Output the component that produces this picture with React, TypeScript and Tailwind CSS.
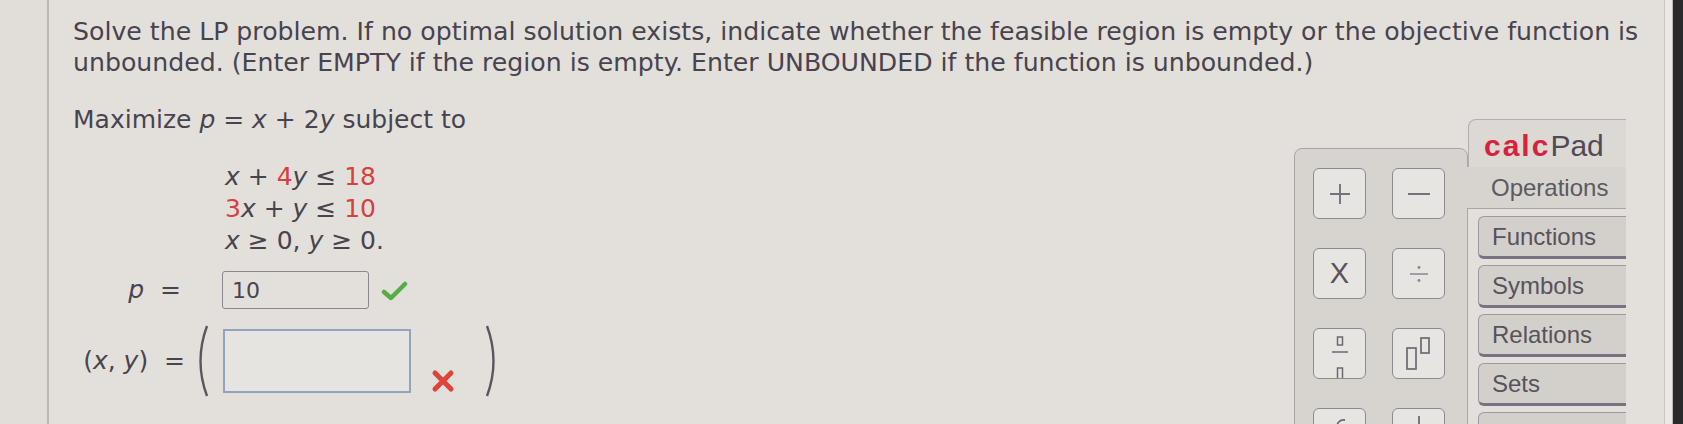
import React from 'react';

const body = { fontFamily: '"DejaVu Sans", Verdana, sans-serif' };
const arial = { fontFamily: '"Liberation Sans", Arial, sans-serif' };

const Key: React.FC<{ children: React.ReactNode }> = ({ children }) => (
  <div className="w-[53px] h-[51px] rounded-md border-[1.5px] border-[#8f8a8e] bg-[#e7e5e1] flex items-center justify-center overflow-hidden text-[#57525d]">
    {children}
  </div>
);

const Tab: React.FC<{ label?: string }> = ({ label }) => (
  <div className="h-[43px] rounded-l-md border border-[#9c98a0] border-b-[3px] border-b-[#7a7183] border-r-0 bg-[#d3d0cb] pl-[13px] flex items-center text-[24px] text-[#57525c]">
    {label}
  </div>
);

const CalcPad: React.FC = () => (
  <div className="flex items-start mt-[15px] mr-[38px] h-[310px] overflow-hidden" style={arial}>
    <div className="w-[174px] h-[300px] mt-[29px] rounded-t-lg border border-[#a9a5a6] bg-[#d7d4cf] pt-[19px] pl-[18px]">
      <div className="grid grid-cols-2 w-[132px] gap-x-[26px] gap-y-[29px]">
        <Key>
          <svg width="22" height="22" viewBox="0 0 22 22">
            <path d="M11 1v20M1 11h20" stroke="#75707a" strokeWidth="1.9" />
          </svg>
        </Key>
        <Key>
          <svg width="24" height="4" viewBox="0 0 24 4">
            <path d="M1 2h22" stroke="#75707a" strokeWidth="2" />
          </svg>
        </Key>
        <Key>
          <span className="text-[29px] leading-none font-medium">X</span>
        </Key>
        <Key>
          <svg width="22" height="22" viewBox="0 0 22 22">
            <path d="M2 11h18" stroke="#8a858c" strokeWidth="1.4" />
            <circle cx="11" cy="4.5" r="1.4" fill="#8a858c" />
            <circle cx="11" cy="17.5" r="1.4" fill="#8a858c" />
          </svg>
        </Key>
        <Key>
          <svg width="20" height="51" viewBox="0 0 20 51">
            <rect x="7.5" y="9" width="5" height="8" fill="none" stroke="#6e6873" strokeWidth="1.5" />
            <path d="M2 24h16" stroke="#6e6873" strokeWidth="1.5" />
            <rect x="7.5" y="40" width="5" height="11" fill="none" stroke="#6e6873" strokeWidth="1.5" />
          </svg>
        </Key>
        <Key>
          <svg width="30" height="36" viewBox="0 0 30 36">
            <rect x="3" y="12" width="9" height="21" fill="none" stroke="#6e6873" strokeWidth="1.7" />
            <rect x="17" y="2" width="8" height="15" fill="none" stroke="#6e6873" strokeWidth="1.7" />
          </svg>
        </Key>
        <Key>
          <svg width="20" height="51" viewBox="0 0 20 51">
            <path d="M6 22 Q7 11 15 12" fill="none" stroke="#6e6873" strokeWidth="1.8" />
          </svg>
        </Key>
        <Key>
          <svg width="20" height="51" viewBox="0 0 20 51">
            <path d="M10 8v24" stroke="#6e6873" strokeWidth="1.8" />
          </svg>
        </Key>
      </div>
    </div>
    <div className="w-[158px] flex flex-col">
      <div className="h-[48px] rounded-tl-lg border-l border-t border-[#b3afb0] bg-[#dcd9d4] pl-[15px] pt-[4px] flex items-center text-[30px] leading-none">
        <span className="font-bold text-[#d8213c] tracking-[2px]">calc</span>
        <span className="text-[#4f4a55]">Pad</span>
      </div>
      <div className="h-[42px] -ml-px bg-[#d7d4cf] border-b border-[#a9a5a6] pl-[24px] flex items-center text-[24px] text-[#5d5862]">
        Operations
      </div>
      <div className="pl-[10px] pt-[7px] flex flex-col gap-[6px]">
        <Tab label="Functions" />
        <Tab label="Symbols" />
        <Tab label="Relations" />
        <Tab label="Sets" />
        <Tab />
      </div>
    </div>
  </div>
);

const I: React.FC<{ children: React.ReactNode }> = ({ children }) => <span className="italic">{children}</span>;
const R: React.FC<{ children: React.ReactNode }> = ({ children }) => <span className="text-[#d6403d]">{children}</span>;

export default function App() {
  return (
    <div className="w-[1683px] h-[424px] flex overflow-hidden bg-[#e3e0db] text-[#48434e]" style={body}>
      <div className="w-[49px] shrink-0 border-r-2 border-[#bcb8b3] bg-[#e1ded9]" />
      <div className="w-[1616px] shrink-0 border-r border-[#c9c6c1] pl-[24px] pt-[16px]">
        <p className="text-[25.2px] leading-[31px] whitespace-nowrap">
          Solve the LP problem. If no optimal solution exists, indicate whether the feasible region is empty or the objective function is
          <br />
          unbounded. (Enter EMPTY if the region is empty. Enter UNBOUNDED if the function is unbounded.)
        </p>
        <div className="flex justify-between mt-[26px]">
          <div className="flex flex-col">
            <p className="text-[25px] leading-[31px] whitespace-nowrap">
              Maximize <I>p</I> = <I>x</I> + 2<I>y</I> subject to
            </p>
            <div className="ml-[152px] mt-[26px] text-[25px] leading-[32px] whitespace-nowrap">
              <div><I>x</I> + <R>4</R><I>y</I> ≤ <R>18</R></div>
              <div><R>3</R><I>x</I> + <I>y</I> ≤ <R>10</R></div>
              <div><I>x</I> ≥ 0, <I>y</I> ≥ 0.</div>
            </div>
            <div className="flex items-center mt-[14px] text-[25px]">
              <div className="w-[108px] text-right whitespace-nowrap"><I>p</I>&nbsp; =</div>
              <div className="ml-[41px] w-[147px] h-[38px] border-[1.5px] border-[#8b8690] rounded-[3px] pl-[9px] flex items-center text-[22px]">10</div>
              <svg className="ml-[12px]" width="27" height="21" viewBox="0 0 27 21">
                <path d="M3 12 L10 18 L24 4" fill="none" stroke="#55ad45" strokeWidth="4.5" strokeLinecap="round" strokeLinejoin="round" />
              </svg>
            </div>
            <div className="flex items-center mt-[16px] text-[25px]">
              <div className="w-[112px] text-right whitespace-nowrap">(<I>x</I>, <I>y</I>)&nbsp; =</div>
              <svg className="ml-[8px]" width="16" height="72" viewBox="0 0 16 72">
                <path d="M14 1 Q1 36 14 71" fill="none" stroke="#5a5560" strokeWidth="2.4" />
              </svg>
              <div className="ml-[14px] w-[188px] h-[64px] border-2 border-[#93a3ba] bg-[#e6e4e0]" />
              <svg className="ml-[20px] mt-[40px]" width="24" height="24" viewBox="0 0 24 24">
                <path d="M4 4 L20 20 M20 4 L4 20" stroke="#e0433d" strokeWidth="5" strokeLinecap="round" />
              </svg>
              <svg className="ml-[30px]" width="16" height="72" viewBox="0 0 16 72">
                <path d="M2 1 Q15 36 2 71" fill="none" stroke="#5a5560" strokeWidth="2.4" />
              </svg>
            </div>
          </div>
          <CalcPad />
        </div>
      </div>
      <div className="w-[8px] shrink-0 bg-[#ebe9e5] border-r border-[#bdb9b4]" />
      <div className="flex-1 bg-[#2a292c]" />
    </div>
  );
}
